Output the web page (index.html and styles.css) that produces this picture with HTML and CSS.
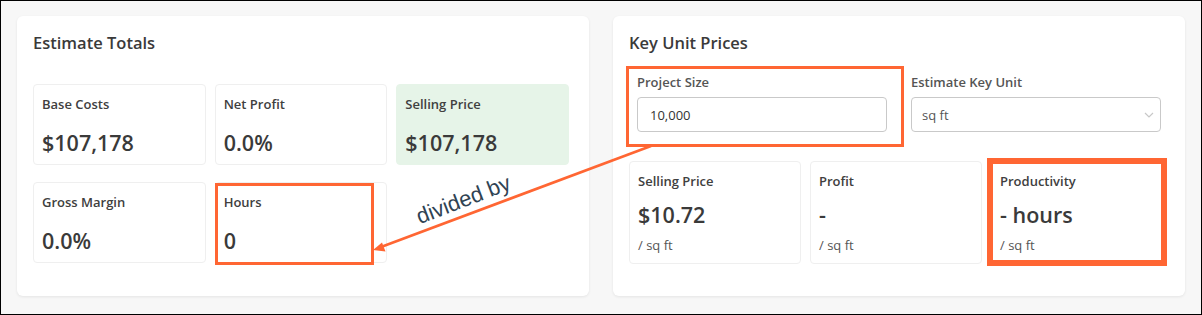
FILE: index.html
```html
<!DOCTYPE html>
<html lang="en">
<head>
    <meta charset="UTF-8">
    <meta name="viewport" content="width=device-width, initial-scale=1.0">
    <title>Estimate Totals</title>
    <link rel="stylesheet" href="styles.css">
</head>
<body>
    <div class="frame">

        <!-- Estimate Totals -->
        <section class="panel panel-left">
            <h2 class="panel-title">Estimate Totals</h2>
            <div class="totals-grid">
                <div class="stat">
                    <div class="stat-label">Base Costs</div>
                    <div class="stat-value">$107,178</div>
                </div>
                <div class="stat">
                    <div class="stat-label">Net Profit</div>
                    <div class="stat-value">0.0%</div>
                </div>
                <div class="stat stat-green">
                    <div class="stat-label">Selling Price</div>
                    <div class="stat-value">$107,178</div>
                </div>
                <div class="stat">
                    <div class="stat-label">Gross Margin</div>
                    <div class="stat-value">0.0%</div>
                </div>
                <div class="stat">
                    <div class="stat-label">Hours</div>
                    <div class="stat-value">0</div>
                </div>
            </div>
        </section>

        <!-- Key Unit Prices -->
        <section class="panel panel-right">
            <h2 class="panel-title">Key Unit Prices</h2>
            <div class="fields">
                <div class="field">
                    <label class="field-label">Project Size</label>
                    <input class="field-input" type="text" value="10,000">
                </div>
                <div class="field">
                    <label class="field-label">Estimate Key Unit</label>
                    <div class="field-input field-select">
                        <span>sq ft</span>
                        <svg width="10" height="6" viewBox="0 0 10 6"><path d="M1 1l4 4 4-4" fill="none" stroke="#c8c8c8" stroke-width="1.2"/></svg>
                    </div>
                </div>
            </div>
            <div class="unit-grid">
                <div class="stat unit">
                    <div class="stat-label">Selling Price</div>
                    <div class="stat-value">$10.72</div>
                    <div class="unit-per">/ sq ft</div>
                </div>
                <div class="stat unit">
                    <div class="stat-label">Profit</div>
                    <div class="stat-value">-</div>
                    <div class="unit-per">/ sq ft</div>
                </div>
                <div class="stat unit">
                    <div class="stat-label">Productivity</div>
                    <div class="stat-value">- hours</div>
                    <div class="unit-per">/ sq ft</div>
                </div>
            </div>
        </section>

        <!-- annotations drawn over the screenshot -->
        <div class="mark mark-size"></div>
        <div class="mark mark-hours"></div>
        <div class="mark mark-prod"></div>
        <svg class="arrow" width="1202" height="315" viewBox="0 0 1202 315">
            <line x1="650" y1="145" x2="380" y2="246" stroke="#ff6633" stroke-width="2.6"/>
            <path d="M372 249 L381 241.5 L384.5 250.5 Z" fill="#ff6633"/>
        </svg>
        <span class="note">divided by</span>
    </div>
</body>
</html>
```

FILE: styles.css
```css
/* Reset */
* {
    margin: 0;
    padding: 0;
    box-sizing: border-box;
}

body {
    font-family: "Open Sans", "Lato", sans-serif;
    color: #333;
    background: #fff;
}

.frame {
    position: relative;
    width: 1202px;
    height: 315px;
    border: 1px solid #000;
    background: #f7f7f7;
    padding: 15px 15px 0 16px;
    display: flex;
    gap: 24px;
}

/* Panels */
.panel {
    width: 572px;
    height: 280px;
    background: #fff;
    border-radius: 6px;
    box-shadow: 0 1px 3px rgba(0, 0, 0, 0.08);
    padding: 17px 20px 16px 16px;
}

.panel-right {
    padding-right: 22px;
}

.panel-title {
    font-size: 16.5px;
    line-height: 20px;
    font-weight: 600;
    color: #3a3a3a;
}

/* Stat cards */
.totals-grid {
    margin-top: 31px;
    display: grid;
    grid-template-columns: repeat(3, 1fr);
    gap: 17px 9px;
}

.stat {
    height: 81px;
    border: 1px solid #efefef;
    border-radius: 4px;
    padding: 11px 8px 7px 8px;
}

.stat-green {
    background: #e6f4e8;
    border-color: #e6f4e8;
}

.stat-label {
    font-size: 13px;
    line-height: 16px;
    font-weight: 600;
    color: #404040;
}

.stat-value {
    margin-top: 17px;
    font-size: 21.5px;
    line-height: 28px;
    font-weight: 600;
    color: #3a3a3a;
}

/* Form fields */
.fields {
    margin-top: 21px;
    padding-left: 8px;
    display: grid;
    grid-template-columns: 250px 250px;
    column-gap: 24px;
}

.field-label {
    display: block;
    font-size: 13px;
    line-height: 16px;
    font-weight: 600;
    color: #555;
}

.field-input {
    display: block;
    width: 250px;
    height: 35px;
    margin-top: 7px;
    border: 1px solid #c9c9c9;
    border-radius: 4px;
    padding: 0 12px;
    font-family: inherit;
    font-size: 13px;
    color: #333;
    background: #fff;
    outline: none;
}

.field-select {
    display: flex;
    align-items: center;
    justify-content: space-between;
    color: #555;
    padding: 0 6px 0 10px;
}

/* Per unit cards */
.unit-grid {
    margin-top: 29px;
    display: grid;
    grid-template-columns: repeat(3, 1fr);
    gap: 9px;
}

.unit {
    height: 103px;
}

.unit .stat-value {
    margin-top: 12px;
}

.unit-per {
    margin-top: 8px;
    font-size: 13px;
    line-height: 16px;
    color: #555;
}

/* Annotations */
.mark {
    position: absolute;
    border: 3px solid #ff6633;
}

.mark-size {
    left: 625px;
    top: 65px;
    width: 278px;
    height: 81px;
}

.mark-hours {
    left: 214px;
    top: 182px;
    width: 159px;
    height: 82px;
}

.mark-prod {
    left: 986px;
    top: 157px;
    width: 180px;
    height: 108px;
    border-width: 6px;
}

.arrow {
    position: absolute;
    left: 0;
    top: 0;
}

.note {
    position: absolute;
    left: 413px;
    top: 186px;
    font-family: "Liberation Sans", Arial, sans-serif;
    font-size: 22px;
    line-height: 26px;
    color: #2f4353;
    transform: rotate(-21deg);
    transform-origin: center;
    white-space: nowrap;
}
```
